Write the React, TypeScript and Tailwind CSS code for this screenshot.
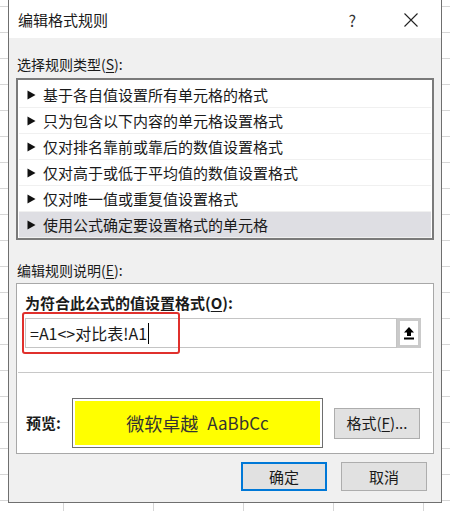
import React from "react";

const font = { fontFamily: '"Noto Sans CJK SC", "Microsoft YaHei", sans-serif' };

const items = [
  "基于各自值设置所有单元格的格式",
  "只为包含以下内容的单元格设置格式",
  "仅对排名靠前或靠后的数值设置格式",
  "仅对高于或低于平均值的数值设置格式",
  "仅对唯一值或重复值设置格式",
  "使用公式确定要设置格式的单元格",
];

function Tri() {
  return (
    <svg width="9" height="10" viewBox="0 0 9 10" className="shrink-0">
      <polygon points="0.5,0.5 8.5,5 0.5,9.5" fill="#111" />
    </svg>
  );
}

export default function App() {
  return (
    <div
      className="relative w-[450px] h-[511px] overflow-hidden bg-white [background-image:linear-gradient(#d6d6d6_1px,transparent_1px),linear-gradient(90deg,#d6d6d6_1px,transparent_1px)] [background-size:90px_26px] [background-position:63px_6px] text-[#1a1a1a]"
      style={font}
    >
      <div className="ml-[8px] w-[434px] h-[503px] border-x border-b border-[#6f6f6f] bg-[#f0f0f0] flex flex-col">
        {/* title bar */}
        <div className="h-[38px] bg-white flex items-center pl-[9px] shrink-0">
          <span className="text-[15px] leading-[20px] mt-[1px]">编辑格式规则</span>
          <span className="ml-auto text-[16px] leading-[20px] text-[#333] mr-[48px] mt-[1px]">?</span>
          <svg width="14" height="14" viewBox="0 0 14 14" className="mr-[23px] mt-[1px]">
            <path d="M0.5 0.5 L13.5 13.5 M13.5 0.5 L0.5 13.5" stroke="#222" strokeWidth="1.1" fill="none" />
          </svg>
        </div>

        {/* body */}
        <div className="flex flex-col">
          <div className="pl-[8px] pt-[16px] text-[14px] leading-[20px]">
            选择规则类型(<span className="underline underline-offset-2">S</span>):
          </div>
          <div className="ml-[7px] mt-[4px] w-[418px] h-[162px] border-2 border-[#7a7a7a] bg-white pt-[2px] px-[1px]">
            {items.map((t, i) => (
              <div
                key={i}
                className={
                  "h-[26px] flex items-center gap-[7px] pl-[8px] border-b border-[#f0f0f0] text-[15px] leading-[20px] " +
                  (i === 5 ? "bg-[#dedee3]" : "")
                }
              >
                <Tri />
                <span>{t}</span>
              </div>
            ))}
          </div>

          <div className="pl-[8px] mt-[20px] text-[14px] leading-[20px]">
            编辑规则说明(<span className="underline underline-offset-2">E</span>):
          </div>

          <div className="ml-[7px] mt-[3px] w-[418px] h-[171px] border border-[#a8a8a8] bg-white flex flex-col">
            <div className="pl-[8px] pt-[9px] text-[15px] leading-[20px] font-bold">
              为符合此公式的值设置格式(<span className="underline underline-offset-2">O</span>):
            </div>
            <div className="relative flex pl-[8px] mt-[5px]">
              <div className="w-[372px] h-[30px] border border-[#c4c4c4] flex items-center pl-[4px] text-[16px] leading-[20px]">
                <span>=A1&lt;&gt;对比表!A1</span>
                <span className="ml-[1px] w-[1px] h-[21px] bg-black" />
              </div>
              <div className="w-[24px] h-[30px] border-[3px] border-[#cacaca] bg-white flex items-center justify-center">
                <svg width="12" height="14" viewBox="0 0 12 14">
                  <polygon points="6,1 11,6.5 8,6.5 8,10 4,10 4,6.5 1,6.5" fill="#000" />
                  <rect x="1" y="11.5" width="10" height="2" fill="#000" />
                </svg>
              </div>
              <div className="absolute left-[5px] top-[-6px] w-[158px] h-[42px] border-2 border-[#e0302c] rounded-[3px]" />
            </div>
            <div className="mt-[24px] mx-[1px] h-[1px] bg-[#c8c8c8]" />
            <div className="flex items-center mt-[25px] pl-[9px]">
              <span className="text-[15px] leading-[20px] font-bold w-[46px]">预览:</span>
              <div className="w-[251px] h-[50px] border border-[#6e6e6e] p-[2px] bg-white">
                <div className="w-full h-full bg-[#ffff00] flex items-center justify-center text-[#333] leading-[22px]">
                  <span className="text-[18px]">微软卓越</span>
                  <span className="text-[17px] ml-[9px]">AaBbCc</span>
                </div>
              </div>
              <div className="ml-[11px] w-[86px] h-[31px] border border-[#adadad] bg-[#e1e1e1] flex items-center justify-center text-[15px] leading-[20px]">
                格式(<span className="underline underline-offset-2">F</span>)...
              </div>
            </div>
          </div>

          <div className="flex justify-end gap-[14px] mr-[14px] mt-[8px]">
            <div className="w-[86px] h-[29px] border-2 border-[#0078d7] bg-[#e1e1e1] flex items-center justify-center text-[15px] leading-[20px]">
              确定
            </div>
            <div className="w-[86px] h-[29px] border border-[#adadad] bg-[#e1e1e1] flex items-center justify-center text-[15px] leading-[20px]">
              取消
            </div>
          </div>
        </div>
      </div>
    </div>
  );
}
